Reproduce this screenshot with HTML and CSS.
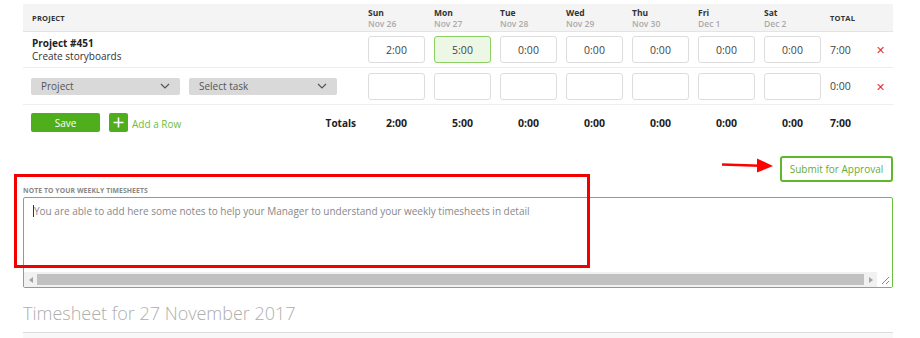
FILE: index.html
```html
<!DOCTYPE html>
<html>
<head>
<meta charset="utf-8">
<link rel="stylesheet" href="styles.css">
</head>
<body>
<div class="page">
  <div class="sheet">
    <div class="row head">
      <div class="cell proj-h">PROJECT</div>
      <div class="cell day"><b>Sun</b><span>Nov 26</span></div>
      <div class="cell day"><b>Mon</b><span>Nov 27</span></div>
      <div class="cell day"><b>Tue</b><span>Nov 28</span></div>
      <div class="cell day"><b>Wed</b><span>Nov 29</span></div>
      <div class="cell day"><b>Thu</b><span>Nov 30</span></div>
      <div class="cell day"><b>Fri</b><span>Dec 1</span></div>
      <div class="cell day"><b>Sat</b><span>Dec 2</span></div>
      <div class="cell total-h">TOTAL</div>
      <div class="cell"></div>
    </div>
    <div class="row r1">
      <div class="cell proj">
        <div class="proj-title">Project #451</div>
        <div class="proj-sub">Create storyboards</div>
      </div>
      <div class="cell"><div class="hrs">2:00</div></div>
      <div class="cell"><div class="hrs active">5:00</div></div>
      <div class="cell"><div class="hrs">0:00</div></div>
      <div class="cell"><div class="hrs">0:00</div></div>
      <div class="cell"><div class="hrs">0:00</div></div>
      <div class="cell"><div class="hrs">0:00</div></div>
      <div class="cell"><div class="hrs">0:00</div></div>
      <div class="cell total">7:00</div>
      <div class="cell del">&#x2715;</div>
    </div>
    <div class="row r2">
      <div class="cell selects">
        <div class="select sel-proj">Project<svg class="chev" viewBox="0 0 10 6" width="10" height="6"><path d="M1 1 L5 5 L9 1" fill="none" stroke="#555" stroke-width="1.2"/></svg></div>
        <div class="select sel-task">Select task<svg class="chev" viewBox="0 0 10 6" width="10" height="6"><path d="M1 1 L5 5 L9 1" fill="none" stroke="#555" stroke-width="1.2"/></svg></div>
      </div>
      <div class="cell"><div class="hrs"></div></div>
      <div class="cell"><div class="hrs"></div></div>
      <div class="cell"><div class="hrs"></div></div>
      <div class="cell"><div class="hrs"></div></div>
      <div class="cell"><div class="hrs"></div></div>
      <div class="cell"><div class="hrs"></div></div>
      <div class="cell"><div class="hrs"></div></div>
      <div class="cell total">0:00</div>
      <div class="cell del">&#x2715;</div>
    </div>
    <div class="row foot">
      <div class="cell actions">
        <button class="save">Save</button>
        <button class="plus"><svg viewBox="0 0 11 11" width="11" height="11"><path d="M5.5 0.5 V10.5 M0.5 5.5 H10.5" stroke="#fff" stroke-width="1.6"/></svg></button>
        <span class="add-row">Add a Row</span>
        <span class="totals-label">Totals</span>
      </div>
      <div class="cell sum">2:00</div>
      <div class="cell sum">5:00</div>
      <div class="cell sum">0:00</div>
      <div class="cell sum">0:00</div>
      <div class="cell sum">0:00</div>
      <div class="cell sum">0:00</div>
      <div class="cell sum">0:00</div>
      <div class="cell grand">7:00</div>
      <div class="cell"></div>
    </div>
  </div>

  <div class="submit-bar">
    <button class="submit">Submit for Approval</button>
  </div>

  <div class="note">
    <div class="note-label">NOTE TO YOUR WEEKLY TIMESHEETS</div>
    <div class="note-box">
      <div class="note-text"><span class="caret"></span>You are able to add here some notes to help your Manager to understand your weekly timesheets in detail</div>
      <div class="hscroll">
        <div class="sarrow"><svg viewBox="0 0 4 6" width="4" height="6"><path d="M4 0 L0 3 L4 6Z" fill="#a3a3a3"/></svg></div>
        <div class="thumb"></div>
        <div class="sarrow"><svg viewBox="0 0 4 6" width="4" height="6"><path d="M0 0 L4 3 L0 6Z" fill="#a3a3a3"/></svg></div>
        <div class="corner"><svg viewBox="0 0 14 14" width="14" height="14"><path d="M12 5 L5 12 M12 9 L9 12" stroke="#888" stroke-width="1"/></svg></div>
      </div>
    </div>
  </div>

  <h2 class="title">Timesheet for 27 November 2017</h2>
  <div class="bottom"></div>

  <div class="highlight"></div>
  <svg class="arrow" viewBox="0 0 54 16" width="54" height="16"><path d="M0 6.5 L38 7.8" stroke="#f00" stroke-width="2.4"/><path d="M35 0.5 L51 8 L35 14.5 Z" fill="#f00"/></svg>
</div>
</body>
</html>
```

FILE: styles.css
```css
* { box-sizing: border-box; }
html, body { margin: 0; padding: 0; background: #fff; }
body { font-family: "Open Sans", "Liberation Sans", sans-serif; color: #333; width: 920px; height: 338px; overflow: hidden; }
.page { position: relative; padding: 4px 0 0 23px; width: 920px; }
.sheet { width: 870px; }
.row { display: grid; grid-template-columns: 345px repeat(7, 66px) 46px 17px; align-items: center; }
.head { height: 28px; background: #f4f4f4; border-bottom: 1px solid #e4e4e4; }
.proj-h { padding-left: 9px; font-size: 7.5px; font-weight: 700; color: #333; letter-spacing: 0.2px; }
.day { display: flex; flex-direction: column; font-size: 8.5px; line-height: 11px; padding-top: 1px; }
.day b { color: #333; font-weight: 700; }
.day span { color: #aaa; font-weight: 600; }
.total-h { font-size: 7.5px; font-weight: 700; color: #333; letter-spacing: 0.2px; }
.r1 { height: 36px; border-bottom: 1px solid #eee; }
.r2 { height: 37px; border-bottom: 1px solid #eee; }
.proj { padding-left: 9px; }
.proj-title { font-size: 10px; font-weight: 700; line-height: 13px; color: #222; }
.proj-sub { font-size: 10px; line-height: 13px; color: #333; }
.hrs { width: 57px; height: 27px; border: 1px solid #ddd; border-radius: 3px; display: flex; align-items: center; justify-content: center; font-size: 10.5px; color: #444; background: #fff; }
.hrs.active { background: #edf7e5; border-color: #8ccf62; }
.total { font-size: 10.5px; color: #444; }
.del { color: #e53333; font-size: 11px; padding-left: 0; }
.selects { display: flex; gap: 9px; padding-left: 8px; }
.select { height: 17px; background: #d9d9d9; border-radius: 2px; display: flex; align-items: center; justify-content: space-between; padding: 0 10px 0 10px; font-size: 10px; color: #555; }
.sel-proj { width: 149px; }
.sel-task { width: 148px; }
.chev { display: block; }
.foot { height: 35px; }
.actions { display: flex; align-items: center; padding-left: 8px; }
.save { width: 69px; height: 19px; border: none; border-radius: 2px; background: #4fae1b; color: #fff; font-family: inherit; font-size: 10px; padding: 0; }
.plus { width: 19px; height: 19px; border: none; border-radius: 2px; background: #4fae1b; margin-left: 9px; padding: 0; display: flex; align-items: center; justify-content: center; }
.plus svg { display: block; }
.add-row { margin-left: 4px; font-size: 10px; color: #6cbd3f; padding-top: 3px; }
.totals-label { margin-left: auto; margin-right: 12px; font-size: 10px; font-weight: 700; color: #222; }
.sum { width: 57px; text-align: center; font-size: 10.5px; font-weight: 700; color: #222; }
.grand { font-size: 10.5px; font-weight: 700; color: #222; }
.submit-bar { width: 870px; display: flex; justify-content: flex-end; margin-top: 16px; }
.submit { width: 113px; height: 26px; border: 2px solid #5db82b; border-radius: 3px; background: #fff; color: #65ad35; font-family: inherit; font-size: 10px; padding: 0; }
.note { width: 870px; margin-top: 4px; }
.note-label { font-size: 6.8px; font-weight: 700; color: #888; line-height: 9px; height: 11px; letter-spacing: 0.1px; }
.note-box { height: 91px; border: 1px solid #6cc03d; border-radius: 2px; display: flex; flex-direction: column; justify-content: space-between; }
.note-text { padding: 6px 0 0 10px; font-size: 10px; line-height: 15px; color: #888; position: relative; }
.caret { display: inline-block; width: 1px; height: 12px; background: #333; vertical-align: -2px; margin-left: -1px; }
.hscroll { height: 15px; display: flex; align-items: center; background: #f1f1f1; }
.sarrow { width: 13px; height: 15px; display: flex; align-items: center; justify-content: center; }
.thumb { flex: 1; height: 11px; background: #c1c1c1; }
.corner { width: 15px; height: 15px; background: #fff; display: flex; }
.corner svg { display: block; }
.title { margin: 12px 0 0 0; font-size: 18px; line-height: 26px; font-weight: 300; color: #aeaeae; }
.bottom { width: 870px; margin-top: 6px; height: 8px; border-top: 1px solid #ddd; background: #f8f8f8; }
.highlight { position: absolute; left: 14px; top: 174px; width: 576px; height: 94px; border: 3px solid #f20000; }
.arrow { position: absolute; left: 722px; top: 158px; }
```
